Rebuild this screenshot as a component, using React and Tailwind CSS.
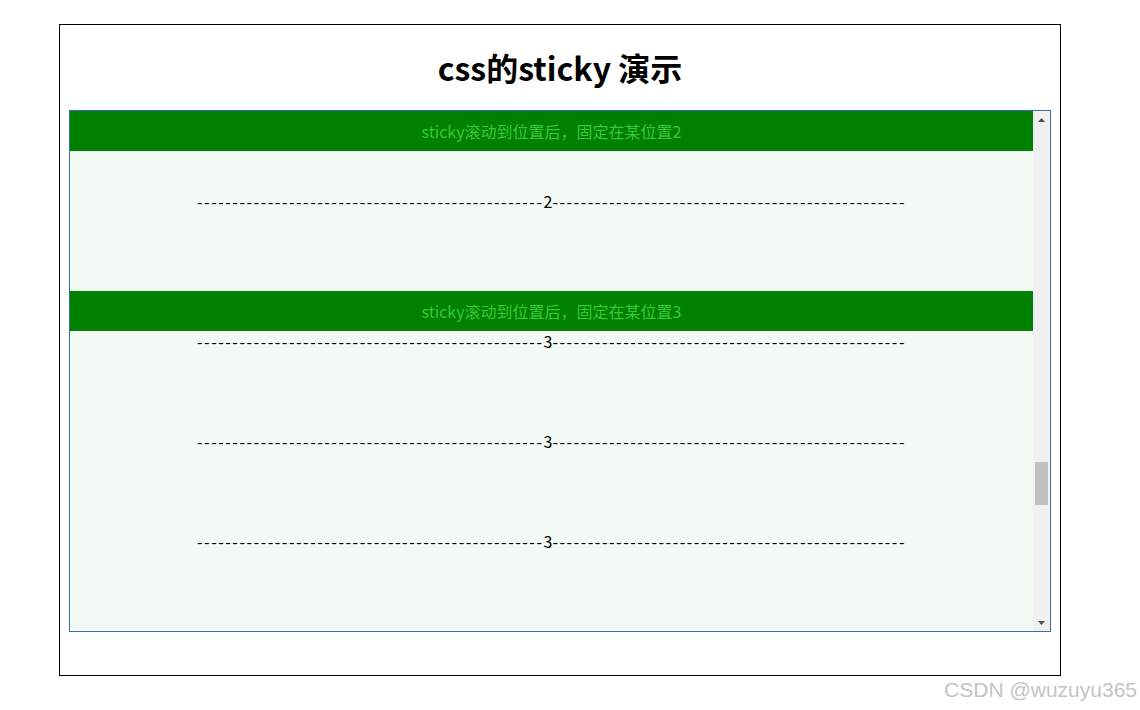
import React from 'react';

const DASHES_L = '-'.repeat(49);
const DASHES_R = '-'.repeat(50);

function DashLine({ n }) {
  return (
    <div className="h-[20px] flex items-center justify-center text-[16px] leading-[20px] text-black whitespace-nowrap">
      <span className="tracking-[1.52px]">{DASHES_L}</span>
      <span>{n}</span>
      <span className="tracking-[1.52px]">{DASHES_R}</span>
    </div>
  );
}

function StickyBar({ n }) {
  return (
    <div className="h-[40px] shrink-0 bg-[#008000] flex items-center justify-center text-[16px] text-[#36c836]">
      sticky滚动到位置后，固定在某位置{n}
    </div>
  );
}

function Scrollbar() {
  return (
    <div className="w-[17px] shrink-0 bg-[#f0f0f0] flex flex-col items-center">
      <div className="h-[17px] w-full flex items-center justify-center">
        <svg width="7" height="4" viewBox="0 0 7 4">
          <path d="M3.5 0 L7 4 L0 4 Z" fill="#505050" />
        </svg>
      </div>
      <div className="h-[334px]" />
      <div className="w-[13px] h-[43px] bg-[#c1c1c1]" />
      <div className="flex-1" />
      <div className="h-[17px] w-full flex items-center justify-center">
        <svg width="7" height="4" viewBox="0 0 7 4">
          <path d="M0 0 L7 0 L3.5 4 Z" fill="#505050" />
        </svg>
      </div>
    </div>
  );
}

export default function App() {
  return (
    <div
      className="relative w-[1140px] h-[710px] bg-white pl-[59px] pt-[24px]"
      style={{ fontFamily: '"Noto Sans CJK SC", "Noto Sans", sans-serif' }}
    >
      <div className="w-[1002px] h-[652px] border border-black flex flex-col">
        {/* heading */}
        <div className="h-[85px] pt-[22px] text-center">
          <h1 className="text-[32px] font-bold leading-[40px] text-black">css的sticky 演示</h1>
        </div>

        {/* scrolling demo box */}
        <div className="mx-[9px] h-[522px] border border-[#3a6ea5] flex overflow-hidden">
          <div className="flex-1 bg-[#f3faf3] flex flex-col overflow-hidden">
            <StickyBar n={2} />
            <div className="pt-[40px] pb-[80px]">
              <DashLine n={2} />
            </div>
            <StickyBar n={3} />
            <div className="flex flex-col gap-[80px]">
              <DashLine n={3} />
              <DashLine n={3} />
              <DashLine n={3} />
            </div>
          </div>
          <Scrollbar />
        </div>
      </div>

      <div
        className="absolute right-[3px] top-[677px] text-[21px] leading-[26px] text-[#c4c4c4]"
        style={{ fontFamily: '"Liberation Sans", Arial, sans-serif' }}
      >
        CSDN @wuzuyu365
      </div>
    </div>
  );
}
